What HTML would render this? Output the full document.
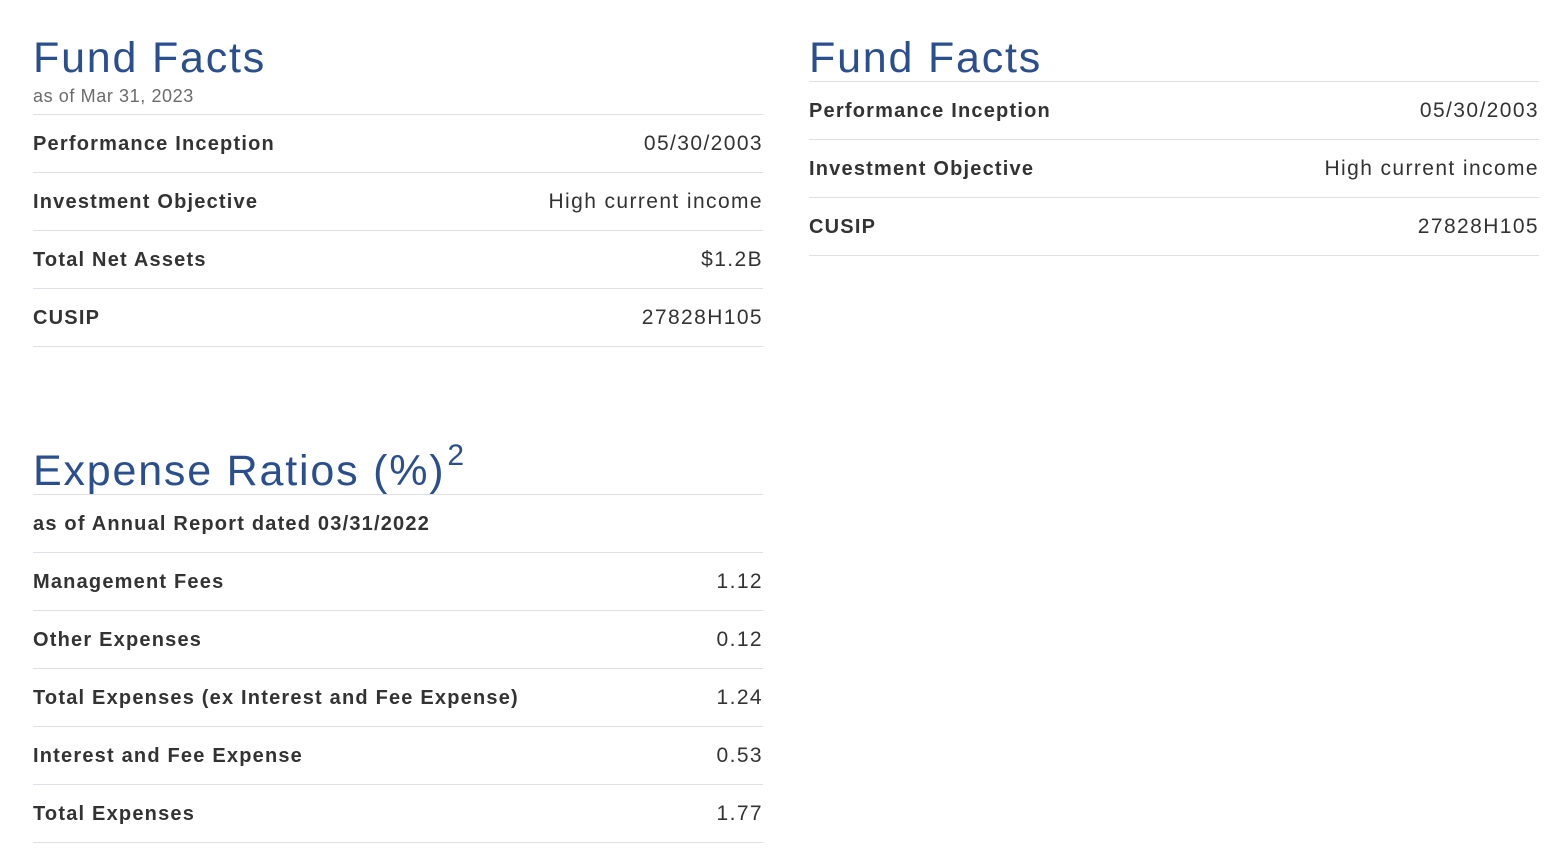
<!DOCTYPE html>
<html><head><meta charset="utf-8"><style>
body{margin:0;width:1568px;height:851px;background:#fff;font-family:"Liberation Sans",sans-serif;color:#333;position:relative;overflow:hidden}
.t{position:absolute;color:#2b4f8e;font-size:43px;line-height:1;letter-spacing:1.8px;white-space:nowrap}
.sub{position:absolute;color:#6b6b6b;font-size:18px;line-height:1;letter-spacing:0.6px}
.hr{position:absolute;height:1px;background:#dde1e6}
.row{position:absolute;height:58px;display:flex;justify-content:space-between;align-items:center;font-size:20px}
.row b{font-weight:bold;color:#333;letter-spacing:1.2px}
.row span{color:#333;letter-spacing:1.4px;font-size:21px}
</style></head><body>
<div class="t" style="left:33px;top:37px">Fund Facts</div>
<div class="sub" style="left:33px;top:87px">as of Mar 31, 2023</div>
<div class="hr" style="left:33px;width:730px;top:114px"></div>
<div class="row" style="left:33px;width:730px;top:115px"><b>Performance Inception</b><span>05/30/2003</span></div>
<div class="hr" style="left:33px;width:730px;top:172px"></div>
<div class="row" style="left:33px;width:730px;top:173px"><b>Investment Objective</b><span>High current income</span></div>
<div class="hr" style="left:33px;width:730px;top:230px"></div>
<div class="row" style="left:33px;width:730px;top:231px"><b>Total Net Assets</b><span>$1.2B</span></div>
<div class="hr" style="left:33px;width:730px;top:288px"></div>
<div class="row" style="left:33px;width:730px;top:289px"><b>CUSIP</b><span>27828H105</span></div>
<div class="hr" style="left:33px;width:730px;top:346px"></div>

<div class="t" style="left:809px;top:37px">Fund Facts</div>
<div class="hr" style="left:809px;width:730px;top:81px"></div>
<div class="row" style="left:809px;width:730px;top:82px"><b>Performance Inception</b><span>05/30/2003</span></div>
<div class="hr" style="left:809px;width:730px;top:139px"></div>
<div class="row" style="left:809px;width:730px;top:140px"><b>Investment Objective</b><span>High current income</span></div>
<div class="hr" style="left:809px;width:730px;top:197px"></div>
<div class="row" style="left:809px;width:730px;top:198px"><b>CUSIP</b><span>27828H105</span></div>
<div class="hr" style="left:809px;width:730px;top:255px"></div>

<div class="t" style="left:33px;top:450px">Expense Ratios (%)<span style="font-size:30px;position:relative;top:-20px;margin-left:2px">2</span></div>
<div class="hr" style="left:33px;width:730px;top:494px"></div>
<div class="row" style="left:33px;width:730px;top:495px"><b>as of Annual Report dated 03/31/2022</b><span></span></div>
<div class="hr" style="left:33px;width:730px;top:552px"></div>
<div class="row" style="left:33px;width:730px;top:553px"><b>Management Fees</b><span>1.12</span></div>
<div class="hr" style="left:33px;width:730px;top:610px"></div>
<div class="row" style="left:33px;width:730px;top:611px"><b>Other Expenses</b><span>0.12</span></div>
<div class="hr" style="left:33px;width:730px;top:668px"></div>
<div class="row" style="left:33px;width:730px;top:669px"><b>Total Expenses (ex Interest and Fee Expense)</b><span>1.24</span></div>
<div class="hr" style="left:33px;width:730px;top:726px"></div>
<div class="row" style="left:33px;width:730px;top:727px"><b>Interest and Fee Expense</b><span>0.53</span></div>
<div class="hr" style="left:33px;width:730px;top:784px"></div>
<div class="row" style="left:33px;width:730px;top:785px"><b>Total Expenses</b><span>1.77</span></div>
<div class="hr" style="left:33px;width:730px;top:842px"></div>
</body></html>
